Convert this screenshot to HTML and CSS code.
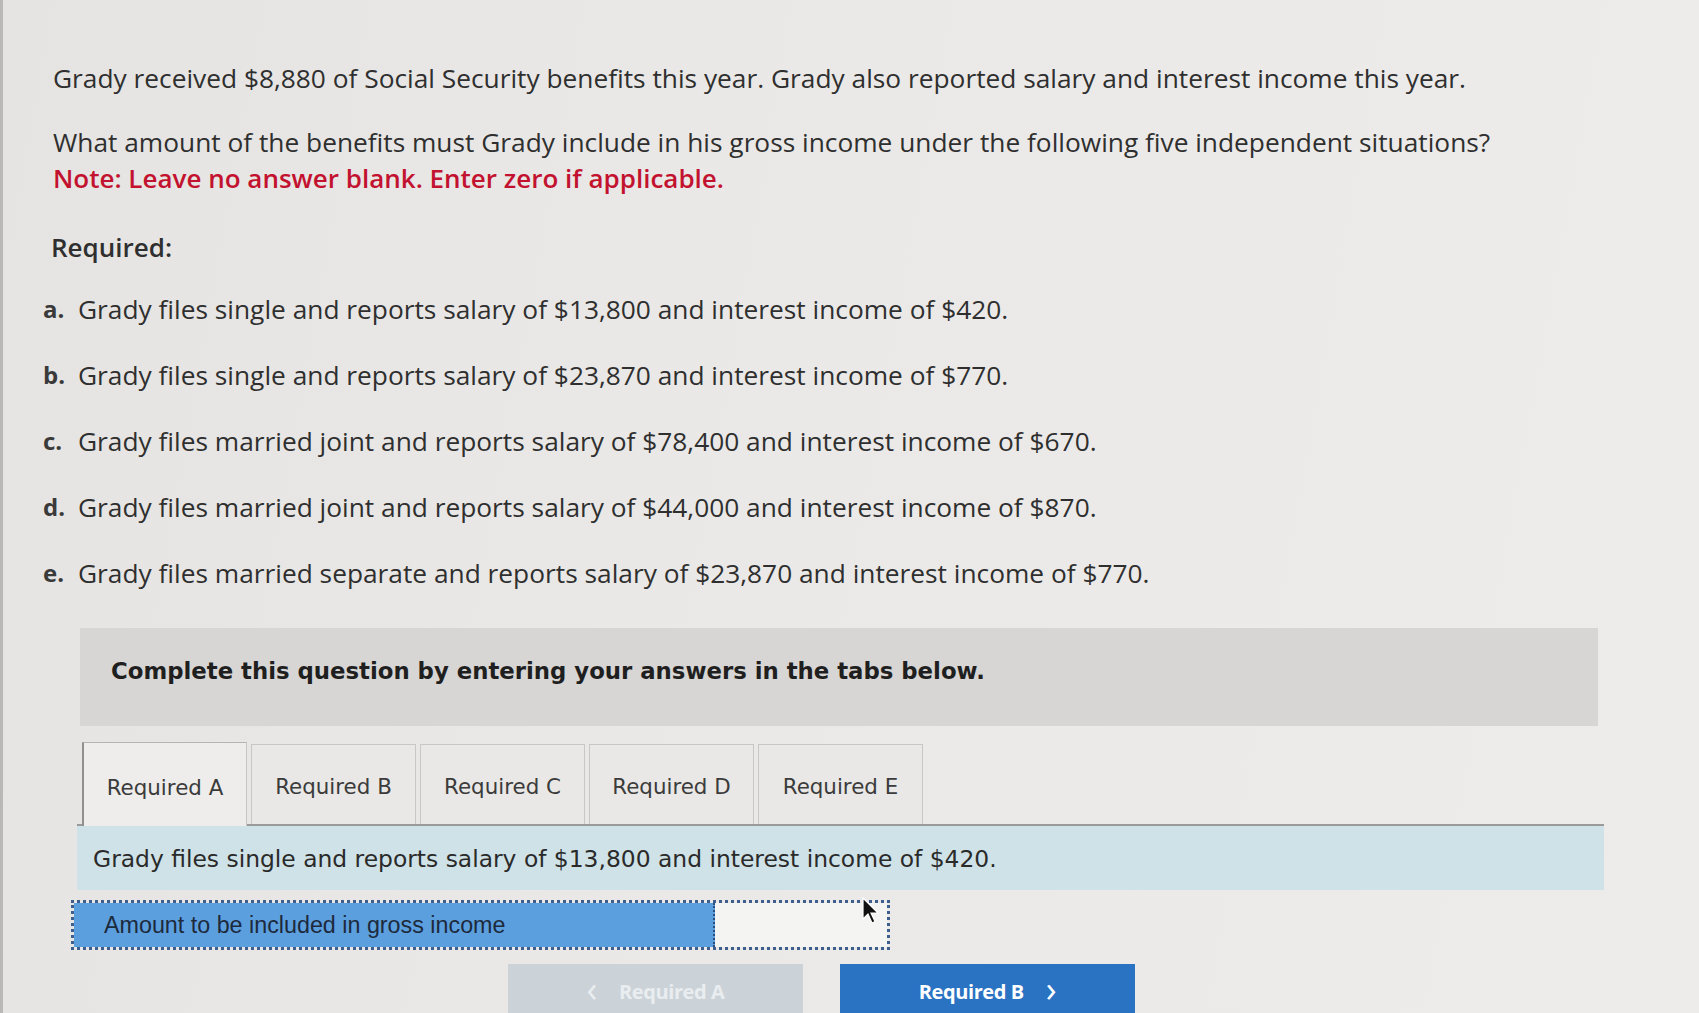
FILE: index.html
```html
<!DOCTYPE html>
<html lang="en">
<head>
<meta charset="utf-8">
<title>Social Security benefits</title>
<link rel="stylesheet" href="styles.css">
</head>
<body>
<main class="page">
  <p class="intro">Grady received $8,880 of Social Security benefits this year. Grady also reported salary and interest income this year.</p>
  <p class="question">What amount of the benefits must Grady include in his gross income under the following five independent situations?<br><strong class="note">Note: Leave no answer blank. Enter zero if applicable.</strong></p>
  <p class="required">Required:</p>
  <ol class="items">
    <li><span class="lbl">a.</span><span>Grady files single and reports salary of $13,800 and interest income of $420.</span></li>
    <li><span class="lbl">b.</span><span>Grady files single and reports salary of $23,870 and interest income of $770.</span></li>
    <li><span class="lbl">c.</span><span>Grady files married joint and reports salary of $78,400 and interest income of $670.</span></li>
    <li><span class="lbl">d.</span><span>Grady files married joint and reports salary of $44,000 and interest income of $870.</span></li>
    <li><span class="lbl">e.</span><span>Grady files married separate and reports salary of $23,870 and interest income of $770.</span></li>
  </ol>

  <section class="work">
    <div class="banner">Complete this question by entering your answers in the tabs below.</div>
    <div class="tabs">
      <div class="tab active">Required A</div>
      <div class="tab">Required B</div>
      <div class="tab">Required C</div>
      <div class="tab">Required D</div>
      <div class="tab">Required E</div>
    </div>
    <div class="panel">Grady files single and reports salary of $13,800 and interest income of $420.</div>
    <div class="answer">
      <div class="answer-label">Amount to be included in gross income</div>
      <div class="answer-input"></div>
      <svg class="cursor" width="18" height="28" viewBox="0 0 18 28"><path d="M1 1 L1 22 L6 17 L10 26 L13 24.5 L9 16 L16 16 Z" fill="#111" stroke="#fff" stroke-width="1.2"/></svg>
    </div>
    <div class="nav">
      <div class="btn btn-prev"><span class="chev">&lsaquo;</span>Required A</div>
      <div class="btn btn-next">Required B<span class="chev">&rsaquo;</span></div>
    </div>
  </section>
</main>
</body>
</html>
```

FILE: styles.css
```css
html, body {
  margin: 0;
  padding: 0;
}
body {
  background: linear-gradient(100deg, #e5e4e2 0%, #eae9e7 45%, #edecea 100%);
  font-family: "Open Sans", "Liberation Sans", sans-serif;
  color: #2f2f2f;
  min-height: 1013px;
  overflow: hidden;
  border-left: 3px solid #b9b8b6;
  box-sizing: border-box;
}
.page {
  padding: 60px 0 0 0;
}
.intro, .question {
  margin: 0 0 0 50px;
  font-size: 26.3px;
  line-height: 36px;
}
.question {
  margin-top: 28px;
}
.note {
  color: #c3122f;
  font-weight: 600;
  font-size: 26px;
}
.required {
  margin: 33px 0 0 48px;
  font-size: 26px;
  line-height: 36px;
  font-weight: 600;
}
.items {
  list-style: none;
  margin: 26px 0 0 40px;
  padding: 0;
  display: flex;
  flex-direction: column;
  gap: 30px;
}
.items li {
  display: flex;
  font-size: 26.3px;
  line-height: 36px;
}
.items .lbl {
  width: 35px;
  font-weight: 700;
  font-size: 24px;
  color: #3a3a3a;
}
.work {
  margin: 37px 0 0 74px;
  width: 1527px;
  font-family: "DejaVu Sans", Verdana, sans-serif;
}
.banner {
  margin-left: 3px;
  width: 1518px;
  height: 98px;
  box-sizing: border-box;
  background: #d7d6d4;
  padding: 30px 0 0 31px;
  font-weight: 700;
  font-size: 22.8px;
  color: #1f1f1f;
}
.tabs {
  margin: 16px 0 0 5px;
  display: flex;
  gap: 4px;
  align-items: flex-end;
  position: relative;
  z-index: 1;
}
.tab {
  width: 165px;
  height: 80px;
  box-sizing: border-box;
  display: flex;
  align-items: center;
  justify-content: center;
  font-size: 21.4px;
  color: #3b3b3b;
  border: 1px solid #c8c7c5;
  border-bottom: none;
  background: #e9e8e6;
  padding-top: 4px;
}
.tab.active {
  height: 84px;
  background: #eeedeb;
  border-left: 2px solid #8f8f8f;
  border-top: 1px solid #b5b4b2;
  margin-bottom: -2px;
  padding-top: 6px;
}
.panel {
  border-top: 2px solid #9a9a9a;
  background: #cfe2e7;
  height: 66px;
  box-sizing: border-box;
  padding: 19px 0 0 16px;
  font-size: 23.4px;
  color: #2a2a2a;
}
.answer {
  position: relative;
  margin: 10px 0 0 -6px;
  width: 819px;
  height: 50px;
  box-sizing: border-box;
  border: 3px dotted #3d5f8f;
  display: flex;
}
.answer-label {
  width: 641px;
  background: #5c9fdf;
  border-right: 2px dotted #2c4f80;
  box-sizing: border-box;
  padding: 9px 0 0 30px;
  font-family: "Liberation Sans", Arial, sans-serif;
  font-size: 23.3px;
  color: #1d2a3c;
}
.answer-input {
  flex: 1;
  background: #f4f4f2;
}
.cursor {
  position: absolute;
  left: 788px;
  top: -6px;
}
.nav {
  margin: 14px 0 0 431px;
  display: flex;
  gap: 37px;
}
.btn {
  width: 295px;
  height: 60px;
  box-sizing: border-box;
  display: flex;
  align-items: center;
  justify-content: center;
  gap: 22px;
  font-family: "Open Sans", "Liberation Sans", sans-serif;
  font-weight: 700;
  font-size: 20px;
  letter-spacing: -0.4px;
  padding-bottom: 6px;
}
.btn .chev {
  font-size: 36px;
  font-weight: 400;
  line-height: 1;
  margin-top: -4px;
}
.btn-prev {
  background: #ccd3d8;
  color: #e9edf0;
}
.btn-next {
  background: #2a72c2;
  color: #ffffff;
}
```
